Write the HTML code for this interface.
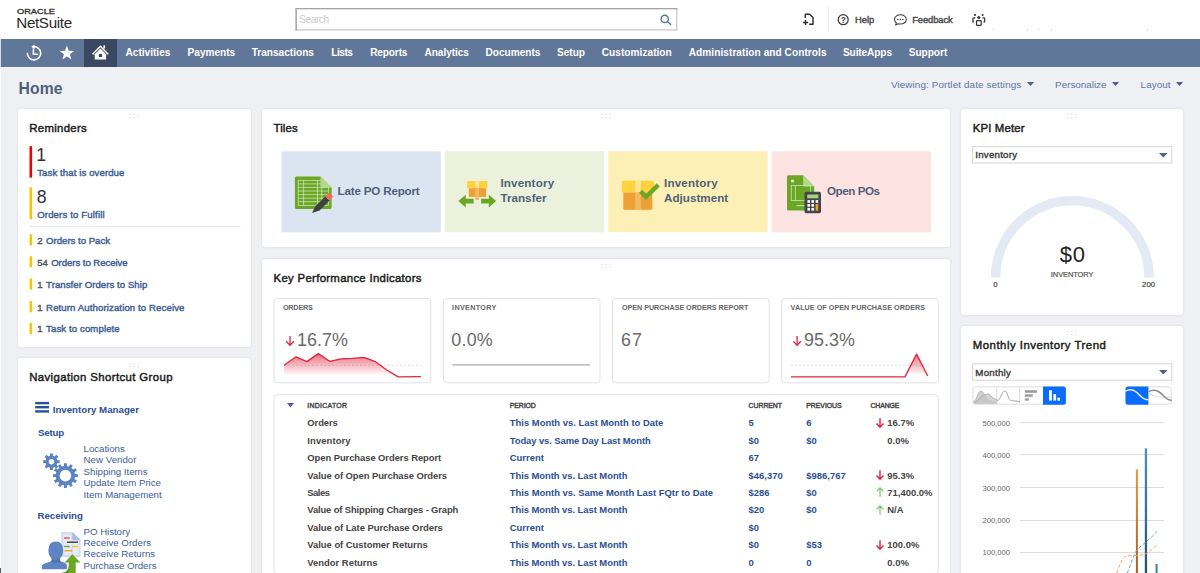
<!DOCTYPE html>
<html lang="en"><head><meta charset="utf-8"><title>Home - NetSuite</title>
<style>
html,body{margin:0;padding:0}
body{width:1200px;height:573px;overflow:hidden;position:relative;background:#eff0f4;font-family:"Liberation Sans",Arial,sans-serif;}
.t{position:absolute;white-space:pre;line-height:normal;}
.abs{position:absolute}
.card{position:absolute;background:#fff;border-radius:3px;box-shadow:0 0 2.5px rgba(50,60,80,.13)}
.grip{position:absolute;width:10px;height:5px;background-image:radial-gradient(circle,#d9dce2 0.7px,transparent 1px);background-size:3.6px 3.2px}
.kt{position:absolute;border:1px solid #e1e3e6;border-radius:4px;box-sizing:border-box;background:#fff}
.sel{position:absolute;border:1px solid #d4d6da;box-sizing:border-box;background:#fff}
.tile{position:absolute;top:151.3px;height:81px;width:159.3px}
svg{position:absolute;overflow:visible}
</style></head><body>
<div class="abs" id="hdr" style="left:0;top:0;width:1200px;height:39px;background:#fff"></div><span class="t" style="left:17.00px;top:7.00px;font-size:7.2px;color:#2e2e2e;-webkit-text-stroke:0.3px #2e2e2e;transform-origin:0 0;transform:scaleX(1.285);">ORACLE</span><span class="t" style="left:16.30px;top:14.00px;font-size:15.2px;letter-spacing:-0.352px;color:#2a2a2a;">NetSuite</span><svg style="left:0;top:0" width="700" height="39"><rect x="295.400" y="8.100" width="382" height="22.500" fill="#fff"/><rect x="295.400" y="29.200" width="382" height="1.400" fill="#cfcfcf"/><rect x="676.100" y="8.100" width="1.300" height="22.500" fill="#cdcdcd"/><rect x="295.400" y="8.100" width="382" height="1.200" fill="#9c9c9c"/><rect x="295.400" y="8.100" width="1.500" height="22.500" fill="#a4a4a4"/></svg><span class="t" style="left:299.00px;top:14.00px;font-size:10.2px;letter-spacing:-0.416px;color:#c9c9c9;">Search</span><div class="abs" style="left:828px;top:6px;width:1px;height:27px;background:#ececec"></div><span class="t" style="left:855.00px;top:14.00px;font-size:9.4px;letter-spacing:-0.027px;color:#484848;-webkit-text-stroke:0.4px #484848;">Help</span><span class="t" style="left:912.20px;top:14.00px;font-size:9.4px;letter-spacing:-0.082px;color:#484848;-webkit-text-stroke:0.4px #484848;">Feedback</span><div class="abs" style="left:993px;top:29px;width:1px;height:1px;background:#c8c8c8"></div><div class="abs" style="left:1027px;top:29px;width:1px;height:1px;background:#c8c8c8"></div><div class="abs" style="left:1038px;top:29px;width:1px;height:1px;background:#c8c8c8"></div><div class="abs" style="left:1051px;top:29px;width:1px;height:1px;background:#c8c8c8"></div><div class="abs" style="left:1147px;top:29px;width:1px;height:1px;background:#c8c8c8"></div><div class="abs" id="nav" style="left:0;top:39px;width:1200px;height:27.5px;background:#607799"></div><div class="abs" style="left:84px;top:39px;width:33px;height:27.5px;background:#3a4861"></div><span class="t" style="left:125.50px;top:47.00px;font-size:10.1px;font-weight:700;color:#fff;">Activities</span><span class="t" style="left:187.60px;top:47.00px;font-size:10.1px;font-weight:700;letter-spacing:-0.015px;color:#fff;">Payments</span><span class="t" style="left:251.70px;top:47.00px;font-size:10.1px;font-weight:700;color:#fff;">Transactions</span><span class="t" style="left:331.20px;top:47.00px;font-size:10.1px;font-weight:700;letter-spacing:-0.441px;color:#fff;">Lists</span><span class="t" style="left:370.20px;top:47.00px;font-size:10.1px;font-weight:700;letter-spacing:-0.140px;color:#fff;">Reports</span><span class="t" style="left:424.50px;top:47.00px;font-size:10.1px;font-weight:700;letter-spacing:-0.049px;color:#fff;">Analytics</span><span class="t" style="left:485.50px;top:47.00px;font-size:10.1px;font-weight:700;color:#fff;">Documents</span><span class="t" style="left:557.00px;top:47.00px;font-size:10.1px;font-weight:700;letter-spacing:-0.012px;color:#fff;">Setup</span><span class="t" style="left:601.75px;top:47.00px;font-size:10.1px;font-weight:700;letter-spacing:0.038px;color:#fff;">Customization</span><span class="t" style="left:688.75px;top:47.00px;font-size:10.1px;font-weight:700;letter-spacing:0.057px;color:#fff;">Administration and Controls</span><span class="t" style="left:843.00px;top:47.00px;font-size:10.1px;font-weight:700;letter-spacing:-0.115px;color:#fff;">SuiteApps</span><span class="t" style="left:908.70px;top:47.00px;font-size:10.1px;font-weight:700;letter-spacing:-0.015px;color:#fff;">Support</span><span class="t" style="left:18.50px;top:80.00px;font-size:15.7px;font-weight:700;letter-spacing:0.135px;color:#4d5f79;">Home</span><span class="t" style="left:890.90px;top:79.00px;font-size:9.9px;letter-spacing:0.111px;color:#5b76a6;">Viewing: Portlet date settings</span><span class="t" style="left:1055.10px;top:79.00px;font-size:9.9px;letter-spacing:-0.021px;color:#5b76a6;">Personalize</span><span class="t" style="left:1140.60px;top:79.00px;font-size:9.9px;letter-spacing:0.069px;color:#5b76a6;">Layout</span><svg style="left:1027.3px;top:82.3px" width="7.2" height="4" viewBox="0 0 7.2 4"><path d="M0 0h7.2L3.6 4z" fill="#4d6289"/></svg><svg style="left:1112.0px;top:82.3px" width="7.2" height="4" viewBox="0 0 7.2 4"><path d="M0 0h7.2L3.6 4z" fill="#4d6289"/></svg><svg style="left:1176.2px;top:82.3px" width="7.2" height="4" viewBox="0 0 7.2 4"><path d="M0 0h7.2L3.6 4z" fill="#4d6289"/></svg><div class="card" style="left:18px;top:109px;width:233px;height:238px"></div><span class="t" style="left:29.30px;top:122.00px;font-size:11.4px;letter-spacing:0.290px;color:#1c1c1c;-webkit-text-stroke:0.45px #1c1c1c;">Reminders</span><svg style="left:0;top:0" width="260" height="350"><rect x="29.500" y="146.200" width="2.600" height="31.400" fill="#f20000"/><rect x="29.500" y="187.400" width="2.600" height="31.800" fill="#fbc300"/><rect x="29" y="225.900" width="211.500" height=".9" fill="#e4e4e4"/><rect x="29.600" y="234.2" width="2.500" height="11.200" fill="#fbc300"/><rect x="29.600" y="256.2" width="2.500" height="11.200" fill="#fbc300"/><rect x="29.600" y="278.4" width="2.500" height="11.200" fill="#fbc300"/><rect x="29.600" y="301.0" width="2.500" height="11.200" fill="#fbc300"/><rect x="29.600" y="322.9" width="2.500" height="11.200" fill="#fbc300"/></svg><span class="t" style="left:36.20px;top:145.00px;font-size:17.7px;color:#333;">1</span><span class="t" style="left:37.20px;top:167.00px;font-size:9.6px;letter-spacing:0.099px;color:#3b5c94;-webkit-text-stroke:0.4px #3b5c94;">Task that is overdue</span><span class="t" style="left:36.70px;top:187.00px;font-size:17.7px;color:#333;">8</span><span class="t" style="left:37.20px;top:209.00px;font-size:9.6px;letter-spacing:0.147px;color:#3b5c94;-webkit-text-stroke:0.4px #3b5c94;">Orders to Fulfill</span><span class="t" style="left:37.20px;top:235.00px;font-size:9.6px;color:#555;-webkit-text-stroke:0.4px #555;">2</span><span class="t" style="left:46.10px;top:235.00px;font-size:9.6px;letter-spacing:-0.006px;color:#3b5c94;-webkit-text-stroke:0.4px #3b5c94;">Orders to Pack</span><span class="t" style="left:37.20px;top:257.00px;font-size:9.6px;color:#555;-webkit-text-stroke:0.4px #555;">54</span><span class="t" style="left:51.20px;top:257.00px;font-size:9.6px;letter-spacing:-0.051px;color:#3b5c94;-webkit-text-stroke:0.4px #3b5c94;">Orders to Receive</span><span class="t" style="left:37.20px;top:279.00px;font-size:9.6px;color:#555;-webkit-text-stroke:0.4px #555;">1</span><span class="t" style="left:46.10px;top:279.00px;font-size:9.6px;letter-spacing:0.060px;color:#3b5c94;-webkit-text-stroke:0.4px #3b5c94;">Transfer Orders to Ship</span><span class="t" style="left:37.20px;top:302.00px;font-size:9.6px;color:#555;-webkit-text-stroke:0.4px #555;">1</span><span class="t" style="left:46.10px;top:302.00px;font-size:9.6px;letter-spacing:0.113px;color:#3b5c94;-webkit-text-stroke:0.4px #3b5c94;">Return Authorization to Receive</span><span class="t" style="left:37.20px;top:323.00px;font-size:9.6px;color:#555;-webkit-text-stroke:0.4px #555;">1</span><span class="t" style="left:46.10px;top:323.00px;font-size:9.6px;letter-spacing:0.107px;color:#3b5c94;-webkit-text-stroke:0.4px #3b5c94;">Task to complete</span><div class="card" style="left:18px;top:358.300px;width:233px;height:230px"></div><span class="t" style="left:29.20px;top:371.00px;font-size:11.4px;letter-spacing:0.378px;color:#1c1c1c;-webkit-text-stroke:0.45px #1c1c1c;">Navigation Shortcut Group</span><svg style="left:0;top:0" width="60" height="420"><g fill="#26509a"><rect x="35.200" y="401.900" width="13.800" height="2.400"/><rect x="35.200" y="406" width="13.800" height="2.400"/><rect x="35.200" y="410.200" width="13.800" height="2.400"/></g></svg><span class="t" style="left:52.70px;top:404.00px;font-size:9.7px;font-weight:700;letter-spacing:0.010px;color:#2b4f95;">Inventory Manager</span><span class="t" style="left:38.00px;top:427.00px;font-size:9.7px;font-weight:700;letter-spacing:-0.180px;color:#2b4f95;">Setup</span><span class="t" style="left:83.60px;top:443.00px;font-size:9.7px;letter-spacing:-0.036px;color:#3c5d99;">Locations</span><span class="t" style="left:83.60px;top:454.00px;font-size:9.7px;letter-spacing:0.013px;color:#3c5d99;">New Vendor</span><span class="t" style="left:83.60px;top:466.00px;font-size:9.7px;letter-spacing:-0.015px;color:#3c5d99;">Shipping Items</span><span class="t" style="left:83.60px;top:477.00px;font-size:9.7px;letter-spacing:-0.009px;color:#3c5d99;">Update Item Price</span><span class="t" style="left:83.60px;top:489.00px;font-size:9.7px;color:#3c5d99;">Item Management</span><span class="t" style="left:37.50px;top:510.00px;font-size:9.7px;font-weight:700;letter-spacing:-0.046px;color:#2b4f95;">Receiving</span><span class="t" style="left:83.60px;top:526.00px;font-size:9.7px;letter-spacing:-0.049px;color:#3c5d99;">PO History</span><span class="t" style="left:83.60px;top:537.00px;font-size:9.7px;letter-spacing:0.007px;color:#3c5d99;">Receive Orders</span><span class="t" style="left:83.60px;top:548.00px;font-size:9.7px;color:#3c5d99;">Receive Returns</span><span class="t" style="left:83.60px;top:560.00px;font-size:9.7px;letter-spacing:-0.024px;color:#3c5d99;">Purchase Orders</span><svg style="left:0;top:0" width="260" height="573" viewBox="0 0 260 573"><path d="M52.87 467.63L52.89 469.97L50.01 469.97L50.03 467.63L48.26 466.90L46.62 468.57L44.58 466.53L46.25 464.89L45.52 463.12L43.18 463.14L43.18 460.26L45.52 460.28L46.25 458.51L44.58 456.87L46.62 454.83L48.26 456.50L50.03 455.77L50.01 453.43L52.89 453.43L52.87 455.77L54.64 456.50L56.28 454.83L58.32 456.87L56.65 458.51L57.38 460.28L59.72 460.26L59.72 463.14L57.38 463.12L56.65 464.89L58.32 466.53L56.28 468.57L54.64 466.90ZM48.75 461.70a2.70 2.70 0 1 0 5.40 0a2.70 2.70 0 1 0 -5.40 0Z" fill="#5b82c4" fill-rule="evenodd"/><path d="M66.92 485.18L66.84 488.02L63.96 488.02L63.88 485.18L61.92 484.66L60.44 487.07L57.95 485.64L59.30 483.14L57.86 481.70L55.36 483.05L53.93 480.56L56.34 479.08L55.82 477.12L52.98 477.04L52.98 474.16L55.82 474.08L56.34 472.12L53.93 470.64L55.36 468.15L57.86 469.50L59.30 468.06L57.95 465.56L60.44 464.13L61.92 466.54L63.88 466.02L63.96 463.18L66.84 463.18L66.92 466.02L68.88 466.54L70.36 464.13L72.85 465.56L71.50 468.06L72.94 469.50L75.44 468.15L76.87 470.64L74.46 472.12L74.98 474.08L77.82 474.16L77.82 477.04L74.98 477.12L74.46 479.08L76.87 480.56L75.44 483.05L72.94 481.70L71.50 483.14L72.85 485.64L70.36 487.07L68.88 484.66ZM59.60 475.60a5.80 5.80 0 1 0 11.60 0a5.80 5.80 0 1 0 -11.60 0Z" fill="#5b82c4" fill-rule="evenodd"/><path d="M61.300 532.600Q61.300 532 61.900 532H72.400L80.700 539.900V556.400Q80.700 557 80.100 557H61.900Q61.300 557 61.300 556.400Z" fill="#d3ddef"/><path d="M72.400 532L80.700 539.900H73.400Q72.400 539.900 72.400 538.900Z" fill="#a9bde0"/><rect x="63.400" y="534.600" width="8" height="20" fill="#e6ecf7"/><rect x="72.600" y="541" width="6" height="13.600" fill="#e6ecf7"/><g stroke-width="1.400" fill="none"><path d="M64.100 538H69.700" stroke="#e8463a"/><path d="M66.900 542.200H78" stroke="#3a3a3a"/><path d="M64.100 546.500H69.700" stroke="#6aa727"/><path d="M72 546.500H78" stroke="#f5c827"/><path d="M64.400 550.700H72.400" stroke="#f0a030"/></g><path d="M41.9 569.200V566.100Q41.900 564.400 44 563.800L50.500 561.500Q51.800 560.900 51.800 559.400L51.500 558.200Q48.400 555.600 48.400 550.200Q48.400 541.400 55.800 541.400Q63.200 541.400 63.200 550.200Q63.200 555.600 60.100 558.200L59.800 559.400Q59.800 560.900 61.100 561.500L64.800 562.800Q66.900 563.600 66.900 565.500V569.200Z" fill="#5f84c4"/><path d="M51.500 558.200Q55.800 561.800 60.100 558.200L59.800 559.400Q59.800 560.900 61.100 561.500Q55.800 564.800 50.500 561.500Q51.800 560.900 51.800 559.400Z" fill="#4f74b4"/><path d="M72.400 554.200L80.300 562.600H75.700V573H61.300Q68.700 572.500 68.700 566V562.600H64.600Z" fill="#6aa727"/><path d="M61.300 573Q68.700 572.500 68.700 566V573Z" fill="#578d1d"/></svg><div class="card" style="left:262px;top:109px;width:688px;height:138px"></div><span class="t" style="left:273.60px;top:122.00px;font-size:11.4px;letter-spacing:0.090px;color:#1c1c1c;-webkit-text-stroke:0.45px #1c1c1c;">Tiles</span><svg style="left:0;top:0" width="1200" height="260"><rect x="281.4" y="151.300" width="159.300" height="81" fill="#dbe5f1"/><rect x="444.8" y="151.300" width="159.300" height="81" fill="#eaf1dd"/><rect x="608.2" y="151.300" width="159.300" height="81" fill="#fdf0b6"/><rect x="771.6" y="151.300" width="159.300" height="81" fill="#fee3e3"/></svg><span class="t" style="left:337.50px;top:184.00px;font-size:11.6px;font-weight:700;letter-spacing:-0.169px;color:#4d5f79;">Late PO Report</span><span class="t" style="left:500.40px;top:176.00px;font-size:11.6px;font-weight:700;letter-spacing:0.189px;color:#4d5f79;">Inventory</span><span class="t" style="left:500.40px;top:191.00px;font-size:11.6px;font-weight:700;letter-spacing:0.062px;color:#4d5f79;">Transfer</span><span class="t" style="left:664.00px;top:176.00px;font-size:11.6px;font-weight:700;letter-spacing:0.189px;color:#4d5f79;">Inventory</span><span class="t" style="left:664.00px;top:191.00px;font-size:11.6px;font-weight:700;letter-spacing:0.048px;color:#4d5f79;">Adjustment</span><span class="t" style="left:826.90px;top:184.00px;font-size:11.6px;font-weight:700;letter-spacing:-0.423px;color:#4d5f79;">Open POs</span><svg style="left:0;top:0" width="1200" height="260" viewBox="0 0 1200 260"><path d="M296.400 176.500H320.600L331.600 187.500V207.500Q331.600 209 330.100 209H296.400Q294.900 209 294.900 207.500V178Q294.900 176.500 296.400 176.500Z" fill="#6aa727"/><path d="M320.600 176.500L331.600 187.500H321.600Q320.600 187.500 320.600 186.500Z" fill="#b5d78b"/><g stroke="#d9ecc4" stroke-width=".7" fill="none"><rect x="298.200" y="180.300" width="30.200" height="25"/><path d="M303.6 180.300V205.300"/><path d="M317.5 180.300V205.300"/><path d="M321.8 180.300V205.300"/><path d="M298.200 183.9H328.400"/><path d="M298.200 187.4H328.400"/><path d="M298.200 191.0H328.400"/><path d="M298.200 194.6H328.400"/><path d="M298.200 198.2H328.400"/><path d="M298.200 201.7H328.400"/></g><path d="M320.600 176.500L331.600 187.500H321.600Q320.600 187.500 320.600 186.500Z" fill="#b5d78b"/><path d="M312 213L315.400 206.300L325.300 196.400L329.500 200.600L319.600 210.500Z" fill="#404040"/><path d="M325.300 196.400L329.100 192.500L333.300 196.700L329.500 200.600Z" fill="#f26d5f"/><rect x="467.100" y="180.900" width="20.400" height="7.400" rx=".8" fill="#ffd33f"/><rect x="475.400" y="180.900" width="3.700" height="7.400" fill="#ffe591"/><rect x="468.800" y="188.200" width="17.300" height="8.700" fill="#eda033"/><rect x="475.400" y="188.200" width="3.700" height="11.900" rx=".5" fill="#f3ba63"/><path d="M458.400 201.100L465.700 194.800V198.700H473.600V203.500H465.700V207.400Z" fill="#6aa727"/><path d="M496.100 201.100L488.800 194.800V198.700H481.100V203.500H488.800V207.400Z" fill="#6aa727"/><path d="M623.400 180.700H652.400Q653.900 180.700 653.900 182.200V192.400H621.900V182.200Q621.900 180.700 623.400 180.700Z" fill="#ffd33f"/><path d="M623.300 192.400H652.300V208.300Q652.300 209.800 650.800 209.800H624.800Q623.300 209.800 623.300 208.300Z" fill="#eda033"/><rect x="635.200" y="180.700" width="5.600" height="11.700" fill="#ffe591"/><rect x="635.200" y="192.400" width="5.600" height="17.400" fill="#f3ba63"/><path d="M640.700 191.300L646 197L658.200 184.900" fill="none" stroke="#6aa727" stroke-width="4.300"/><path d="M788.500 175.300H803.200L814.200 186.500V209Q814.200 210.500 812.700 210.500H788.500Q787 210.500 787 209V176.800Q787 175.300 788.500 175.300Z" fill="#6aa727"/><path d="M803.200 175.300L814.200 186.500H804.200Q803.200 186.500 803.200 185.500Z" fill="#b5d78b"/><rect x="791.200" y="179.700" width="2.600" height="2.600" fill="#e8f3dc"/><g stroke="#cde4b3" stroke-width=".8" fill="none"><rect x="791.200" y="185.400" width="19.400" height="15.200"/><path d="M795.400 185.400V200.600"/><path d="M796.400 205.600H805" stroke-width="1"/></g><rect x="804.500" y="191.700" width="16.500" height="21.500" rx="1.800" fill="#454545"/><rect x="807.200" y="194.500" width="11.200" height="3.800" fill="#a9d18e"/><rect x="807.4" y="200.1" width="2.600" height="2.700" fill="#fff"/><rect x="807.4" y="204.0" width="2.600" height="2.700" fill="#fff"/><rect x="807.4" y="207.9" width="2.600" height="2.700" fill="#fff"/><rect x="811.4" y="200.1" width="2.600" height="2.700" fill="#fff"/><rect x="811.4" y="204.0" width="2.600" height="2.700" fill="#fff"/><rect x="811.4" y="207.9" width="2.600" height="2.700" fill="#fff"/><rect x="815.600" y="200.100" width="2.600" height="2.700" fill="#fff"/><rect x="815.600" y="204" width="2.600" height="6.700" fill="#f0a030"/></svg><div class="card" style="left:262px;top:259px;width:688px;height:330px"></div><span class="t" style="left:273.60px;top:272.00px;font-size:11.4px;letter-spacing:0.294px;color:#1c1c1c;-webkit-text-stroke:0.45px #1c1c1c;">Key Performance Indicators</span><svg style="left:0;top:0" width="1200" height="573"><rect x="274.1" y="298.500" width="156.700" height="84.300" rx="3.500" fill="#fff" stroke="#e0e2e5" stroke-width="1"/><rect x="443.3" y="298.500" width="156.700" height="84.300" rx="3.500" fill="#fff" stroke="#e0e2e5" stroke-width="1"/><rect x="612.5" y="298.500" width="156.700" height="84.300" rx="3.500" fill="#fff" stroke="#e0e2e5" stroke-width="1"/><rect x="781.7" y="298.500" width="156.700" height="84.300" rx="3.500" fill="#fff" stroke="#e0e2e5" stroke-width="1"/><rect x="274.100" y="394.700" width="664.200" height="178.900" rx="3.500" fill="#fff" stroke="#e0e2e5" stroke-width="1"/></svg><span class="t" style="left:282.90px;top:303.00px;font-size:7.2px;font-weight:700;letter-spacing:-0.153px;color:#666;">ORDERS</span><span class="t" style="left:452.10px;top:303.00px;font-size:7.2px;font-weight:700;letter-spacing:0.319px;color:#666;">INVENTORY</span><span class="t" style="left:622.00px;top:303.00px;font-size:7.2px;font-weight:700;letter-spacing:-0.043px;color:#666;">OPEN PURCHASE ORDERS REPORT</span><span class="t" style="left:790.60px;top:303.00px;font-size:7.2px;font-weight:700;letter-spacing:0.041px;color:#666;">VALUE OF OPEN PURCHASE ORDERS</span><span class="t" style="left:296.90px;top:330.00px;font-size:17.9px;letter-spacing:0.066px;color:#6a6a6a;">16.7%</span><span class="t" style="left:451.30px;top:330.00px;font-size:17.9px;letter-spacing:0.206px;color:#6a6a6a;">0.0%</span><span class="t" style="left:620.90px;top:330.00px;font-size:17.9px;letter-spacing:1.200px;color:#6a6a6a;">67</span><span class="t" style="left:803.90px;top:330.00px;font-size:17.9px;letter-spacing:0.066px;color:#6a6a6a;">95.3%</span><svg style="left:0;top:0" width="1200" height="400" viewBox="0 0 1200 400"><defs><linearGradient id="rg" gradientUnits="userSpaceOnUse" x1="0" y1="353" x2="0" y2="375.500"><stop offset="0" stop-color="#e0243f" stop-opacity=".68"/><stop offset="1" stop-color="#e0243f" stop-opacity="0"/></linearGradient></defs><path d="M290.0 336V345.300M286.2 341.300L290.0 345.400L293.8 341.300" fill="none" stroke="#e0243f" stroke-width="1.300"/><path d="M797.1 336V345.300M793.3 341.300L797.1 345.400L800.9 341.300" fill="none" stroke="#e0243f" stroke-width="1.300"/><path d="M284.100 365.300H421" stroke="#d4d4d4" stroke-width=".8" stroke-dasharray="2 2" fill="none"/><polygon points="284.1,365.2 296.1,356.8 306.9,361.6 318.3,353.6 329.7,361.3 341.1,358.9 352.5,358.3 363.9,357.4 375.3,361.6 386.7,370.0 398.1,376.9 420.9,376.6 420.900,377.500 284.100,377.500" fill="url(#rg)"/><polyline points="284.1,365.2 296.1,356.8 306.9,361.6 318.3,353.6 329.7,361.3 341.1,358.9 352.5,358.3 363.9,357.4 375.3,361.6 386.7,370.0 398.1,376.9 420.9,376.6" fill="none" stroke="#e0243f" stroke-width="1.300" stroke-linejoin="round"/><path d="M452.400 364.900H590.100" stroke="#ababab" stroke-width="1.400"/><path d="M790.900 365.300H929" stroke="#d4d4d4" stroke-width=".8" stroke-dasharray="2 2" fill="none"/><polygon points="904.900,377.500 916.600,354.100 927.700,377.500" fill="url(#rg)"/><polyline points="790.9,376.9 904.9,376.9 916.6,354.1 927.7,376.0" fill="none" stroke="#e0243f" stroke-width="1.300" stroke-linejoin="round"/></svg><svg style="left:287.3px;top:402.6px" width="7" height="4.4" viewBox="0 0 7 4.4"><path d="M0 0h7L3.5 4.4z" fill="#47639a"/></svg><span class="t" style="left:307.30px;top:402.00px;font-size:6.9px;letter-spacing:0.292px;color:#444;-webkit-text-stroke:0.4px #444;">INDICATOR</span><span class="t" style="left:509.75px;top:402.00px;font-size:6.9px;letter-spacing:-0.084px;color:#444;-webkit-text-stroke:0.4px #444;">PERIOD</span><span class="t" style="left:748.60px;top:402.00px;font-size:6.9px;letter-spacing:-0.048px;color:#444;-webkit-text-stroke:0.4px #444;">CURRENT</span><span class="t" style="left:806.30px;top:402.00px;font-size:6.9px;letter-spacing:-0.046px;color:#444;-webkit-text-stroke:0.4px #444;">PREVIOUS</span><span class="t" style="left:870.50px;top:402.00px;font-size:6.9px;letter-spacing:-0.137px;color:#444;-webkit-text-stroke:0.4px #444;">CHANGE</span><span class="t" style="left:307.30px;top:417.00px;font-size:9.45px;font-weight:700;letter-spacing:-0.091px;color:#444;">Orders</span><span class="t" style="left:509.75px;top:417.00px;font-size:9.45px;font-weight:700;color:#2b4f95;">This Month vs. Last Month to Date</span><span class="t" style="left:748.60px;top:417.00px;font-size:9.45px;font-weight:700;color:#2b4f95;">5</span><span class="t" style="left:806.30px;top:417.00px;font-size:9.45px;font-weight:700;color:#2b4f95;">6</span><span class="t" style="left:887.30px;top:417.00px;font-size:9.45px;font-weight:700;color:#444;">16.7%</span><svg style="left:876.2px;top:417.8px" width="8" height="10" viewBox="0 0 8 10"><path d="M4 0.300V9M0.500 5.600L4 9.200L7.500 5.600" fill="none" stroke="#e0243f" stroke-width="1.450"/></svg><span class="t" style="left:307.30px;top:435.00px;font-size:9.45px;font-weight:700;letter-spacing:0.102px;color:#444;">Inventory</span><span class="t" style="left:509.75px;top:435.00px;font-size:9.45px;font-weight:700;letter-spacing:-0.090px;color:#2b4f95;">Today vs. Same Day Last Month</span><span class="t" style="left:748.60px;top:435.00px;font-size:9.45px;font-weight:700;color:#2b4f95;">$0</span><span class="t" style="left:806.30px;top:435.00px;font-size:9.45px;font-weight:700;color:#2b4f95;">$0</span><span class="t" style="left:887.30px;top:435.00px;font-size:9.45px;font-weight:700;color:#444;">0.0%</span><span class="t" style="left:307.30px;top:452.00px;font-size:9.45px;font-weight:700;letter-spacing:-0.075px;color:#444;">Open Purchase Orders Report</span><span class="t" style="left:509.75px;top:452.00px;font-size:9.45px;font-weight:700;color:#2b4f95;">Current</span><span class="t" style="left:748.60px;top:452.00px;font-size:9.45px;font-weight:700;color:#2b4f95;">67</span><span class="t" style="left:307.30px;top:470.00px;font-size:9.45px;font-weight:700;letter-spacing:-0.065px;color:#444;">Value of Open Purchase Orders</span><span class="t" style="left:509.75px;top:470.00px;font-size:9.45px;font-weight:700;letter-spacing:-0.055px;color:#2b4f95;">This Month vs. Last Month</span><span class="t" style="left:748.60px;top:470.00px;font-size:9.45px;font-weight:700;color:#2b4f95;">$46,370</span><span class="t" style="left:806.30px;top:470.00px;font-size:9.45px;font-weight:700;color:#2b4f95;">$986,767</span><span class="t" style="left:887.30px;top:470.00px;font-size:9.45px;font-weight:700;color:#444;">95.3%</span><svg style="left:876.2px;top:470.0px" width="8" height="10" viewBox="0 0 8 10"><path d="M4 0.300V9M0.500 5.600L4 9.200L7.500 5.600" fill="none" stroke="#e0243f" stroke-width="1.450"/></svg><span class="t" style="left:307.30px;top:487.00px;font-size:9.45px;font-weight:700;letter-spacing:-0.518px;color:#444;">Sales</span><span class="t" style="left:509.75px;top:487.00px;font-size:9.45px;font-weight:700;letter-spacing:-0.016px;color:#2b4f95;">This Month vs. Same Month Last FQtr to Date</span><span class="t" style="left:748.60px;top:487.00px;font-size:9.45px;font-weight:700;color:#2b4f95;">$286</span><span class="t" style="left:806.30px;top:487.00px;font-size:9.45px;font-weight:700;color:#2b4f95;">$0</span><span class="t" style="left:887.30px;top:487.00px;font-size:9.45px;font-weight:700;color:#444;">71,400.0%</span><svg style="left:876.2px;top:487.4px" width="8" height="10" viewBox="0 0 8 10"><path d="M4 9.700V1M0.600 4.300L4 0.800L7.400 4.300" fill="none" stroke="#6dcb5e" stroke-width="1.150"/></svg><span class="t" style="left:307.30px;top:504.00px;font-size:9.45px;font-weight:700;letter-spacing:-0.148px;color:#444;">Value of Shipping Charges - Graph</span><span class="t" style="left:509.75px;top:504.00px;font-size:9.45px;font-weight:700;letter-spacing:-0.055px;color:#2b4f95;">This Month vs. Last Month</span><span class="t" style="left:748.60px;top:504.00px;font-size:9.45px;font-weight:700;color:#2b4f95;">$20</span><span class="t" style="left:806.30px;top:504.00px;font-size:9.45px;font-weight:700;color:#2b4f95;">$0</span><span class="t" style="left:887.30px;top:504.00px;font-size:9.45px;font-weight:700;color:#444;">N/A</span><svg style="left:876.2px;top:504.8px" width="8" height="10" viewBox="0 0 8 10"><path d="M4 9.700V1M0.600 4.300L4 0.800L7.400 4.300" fill="none" stroke="#6dcb5e" stroke-width="1.150"/></svg><span class="t" style="left:307.30px;top:522.00px;font-size:9.45px;font-weight:700;letter-spacing:-0.050px;color:#444;">Value of Late Purchase Orders</span><span class="t" style="left:509.75px;top:522.00px;font-size:9.45px;font-weight:700;color:#2b4f95;">Current</span><span class="t" style="left:748.60px;top:522.00px;font-size:9.45px;font-weight:700;color:#2b4f95;">$0</span><span class="t" style="left:307.30px;top:539.00px;font-size:9.45px;font-weight:700;letter-spacing:-0.031px;color:#444;">Value of Customer Returns</span><span class="t" style="left:509.75px;top:539.00px;font-size:9.45px;font-weight:700;letter-spacing:-0.055px;color:#2b4f95;">This Month vs. Last Month</span><span class="t" style="left:748.60px;top:539.00px;font-size:9.45px;font-weight:700;color:#2b4f95;">$0</span><span class="t" style="left:806.30px;top:539.00px;font-size:9.45px;font-weight:700;color:#2b4f95;">$53</span><span class="t" style="left:887.30px;top:539.00px;font-size:9.45px;font-weight:700;color:#444;">100.0%</span><svg style="left:876.2px;top:539.6px" width="8" height="10" viewBox="0 0 8 10"><path d="M4 0.300V9M0.500 5.600L4 9.200L7.500 5.600" fill="none" stroke="#e0243f" stroke-width="1.450"/></svg><span class="t" style="left:307.30px;top:557.00px;font-size:9.45px;font-weight:700;letter-spacing:-0.006px;color:#444;">Vendor Returns</span><span class="t" style="left:509.75px;top:557.00px;font-size:9.45px;font-weight:700;letter-spacing:-0.055px;color:#2b4f95;">This Month vs. Last Month</span><span class="t" style="left:748.60px;top:557.00px;font-size:9.45px;font-weight:700;color:#2b4f95;">0</span><span class="t" style="left:806.30px;top:557.00px;font-size:9.45px;font-weight:700;color:#2b4f95;">0</span><span class="t" style="left:887.30px;top:557.00px;font-size:9.45px;font-weight:700;color:#444;">0.0%</span><div class="card" style="left:961px;top:109px;width:222.2px;height:206px"></div><span class="t" style="left:972.80px;top:122.00px;font-size:11.4px;letter-spacing:0.132px;color:#1c1c1c;-webkit-text-stroke:0.45px #1c1c1c;">KPI Meter</span><svg style="left:0;top:0" width="1200" height="400"><rect x="972.700" y="146.600" width="199.100" height="16.400" fill="#fff" stroke="#d3d5d9" stroke-width="1"/></svg><span class="t" style="left:975.30px;top:149.00px;font-size:9.7px;letter-spacing:0.230px;color:#3c3c3c;-webkit-text-stroke:0.4px #3c3c3c;">Inventory</span><svg style="left:1159.4px;top:152.8px" width="8.6" height="4.5" viewBox="0 0 8.6 4.5"><path d="M0 0h8.6L4.3 4.5z" fill="#4d6289"/></svg><svg style="left:0;top:0" width="1200" height="573"><path d="M995.55 277.6A76.75 76.75 0 0 1 1149.05 277.6" fill="none" stroke="#e4eaf3" stroke-width="9.5"/></svg><span class="t" style="left:1059.70px;top:242.00px;font-size:22px;letter-spacing:0.716px;color:#222;">$0</span><span class="t" style="left:1050.85px;top:270.00px;font-size:7.5px;letter-spacing:-0.098px;color:#555;-webkit-text-stroke:0.2px #555;">INVENTORY</span><span class="t" style="left:993.30px;top:280.00px;font-size:7.7px;color:#444;-webkit-text-stroke:0.2px #444;">0</span><span class="t" style="left:1142.10px;top:280.00px;font-size:7.7px;letter-spacing:0.036px;color:#444;-webkit-text-stroke:0.2px #444;">200</span><div class="card" style="left:961px;top:326.3px;width:222.2px;height:260px"></div><span class="t" style="left:972.80px;top:339.00px;font-size:11.4px;letter-spacing:0.491px;color:#1c1c1c;-webkit-text-stroke:0.45px #1c1c1c;">Monthly Inventory Trend</span><svg style="left:0;top:0" width="1200" height="400"><rect x="972.700" y="363.800" width="199.100" height="16.400" fill="#fff" stroke="#d3d5d9" stroke-width="1"/></svg><span class="t" style="left:975.30px;top:367.00px;font-size:9.7px;letter-spacing:0.280px;color:#3c3c3c;-webkit-text-stroke:0.4px #3c3c3c;">Monthly</span><svg style="left:1159.4px;top:369.9px" width="8.6" height="4.5" viewBox="0 0 8.6 4.5"><path d="M0 0h8.6L4.3 4.5z" fill="#4d6289"/></svg><svg style="left:0;top:0" width="1200" height="420" viewBox="0 0 1200 420"><rect x="973" y="386.900" width="92.400" height="17.300" rx="2.500" fill="#fff" stroke="#dcdcdc" stroke-width="1"/><path d="M1043 386.400H1063.400Q1065.900 386.400 1065.900 388.900V402.200Q1065.900 404.700 1063.400 404.700H1043Z" fill="#0a6cff"/><rect x="1126" y="386.900" width="45.200" height="17.300" rx="2.500" fill="#fff" stroke="#dcdcdc" stroke-width="1"/><path d="M1148.400 386.400H1128Q1125.500 386.400 1125.500 388.900V402.200Q1125.500 404.700 1128 404.700H1148.400Z" fill="#0a6cff"/><path d="M996.800 387V404M1019.700 387V404" stroke="#dcdcdc" stroke-width="1"/><clipPath id="c1"><rect x="973.300" y="387.200" width="23.500" height="16.500" rx="2"/></clipPath><g clip-path="url(#c1)"><path d="M973 402C977 401 977.500 391.100 981 391.100S985 400 990 401S994 403 997 403.500V404.700H973Z" fill="#cfcfcf" stroke="#b3b3b3" stroke-width=".8"/><path d="M973 403C978 402 982 394.100 987.500 394.100C991 394.100 991 398.500 997 399.500V404.700H973Z" fill="#c4c4c4" fill-opacity=".75" stroke="#ababab" stroke-width=".8"/></g><path d="M996.800 400.800C1001 400.500 1001.500 391.100 1004.800 391.100S1007.500 399 1010.500 400.200S1016 400.600 1019.700 401.700" fill="none" stroke="#a8a8a8" stroke-width="1"/><g fill="#9c9c9c"><rect x="1024.800" y="390.200" width="12.100" height="2.600"/><rect x="1024.800" y="394.300" width="8" height="2.500"/><rect x="1024.800" y="398.300" width="4.100" height="2.400"/></g><g fill="#fff"><rect x="1049" y="390.200" width="2.900" height="10.400"/><rect x="1053.400" y="394.100" width="2.700" height="6.500"/><rect x="1057.400" y="397.600" width="2.600" height="3"/></g><path d="M1125.400 391.200C1128 389.600 1131.500 389.200 1134.500 390.800C1140 393.600 1141 399.900 1148.400 399.800" fill="none" stroke="#fff" stroke-opacity=".9" stroke-width="1.500"/><path d="M1148.800 392.800C1153 397 1162 397.600 1171.600 396.800" fill="none" stroke="#dedede" stroke-width="1"/><path d="M1148.800 391.700C1151.500 390.100 1155 389.900 1158 391.300C1164 394.200 1164.500 400.300 1171.700 400.300" fill="none" stroke="#8c8c8c" stroke-width="1.500"/></svg><div class="abs" style="left:1020px;top:421.6px;width:144.4px;height:1px;background:#dedede"></div><span class="t" style="left:982.40px;top:419.00px;font-size:7.7px;letter-spacing:-0.033px;color:#666;">500,000</span><div class="abs" style="left:1020px;top:454.2px;width:144.4px;height:1px;background:#dedede"></div><span class="t" style="left:982.40px;top:451.00px;font-size:7.7px;letter-spacing:-0.033px;color:#666;">400,000</span><div class="abs" style="left:1020px;top:486.8px;width:144.4px;height:1px;background:#dedede"></div><span class="t" style="left:982.40px;top:484.00px;font-size:7.7px;letter-spacing:-0.033px;color:#666;">300,000</span><div class="abs" style="left:1020px;top:519.5px;width:144.4px;height:1px;background:#dedede"></div><span class="t" style="left:982.40px;top:516.00px;font-size:7.7px;letter-spacing:-0.033px;color:#666;">200,000</span><div class="abs" style="left:1020px;top:552.1px;width:144.4px;height:1px;background:#dedede"></div><span class="t" style="left:982.40px;top:548.00px;font-size:7.7px;letter-spacing:-0.033px;color:#666;">100,000</span><svg style="left:0;top:0" width="1200" height="573" viewBox="0 0 1200 573"><defs><linearGradient id="og" x1="0" y1="0" x2="0" y2="1"><stop offset="0" stop-color="#f0933a"/><stop offset="1" stop-color="#a85f1f"/></linearGradient><linearGradient id="bg" x1="0" y1="0" x2="0" y2="1"><stop offset="0" stop-color="#4f8fc0"/><stop offset="1" stop-color="#27506f"/></linearGradient></defs><rect x="1135.900" y="469.500" width="2" height="104" fill="url(#og)"/><rect x="1144.800" y="448.300" width="2.300" height="125" fill="url(#bg)"/><rect x="1155.600" y="564" width="2" height="10" fill="#3f7cab"/><path d="M1127.200 573C1131 565 1133 556 1136.300 551S1150 540 1156.800 531.400" fill="none" stroke="#6aa3d5" stroke-width="1" stroke-dasharray="3.500 2"/><path d="M1116.600 573C1120 565 1122 556.500 1127 556S1140 556 1145.300 554S1153 547 1158 545.600" fill="none" stroke="#f2a660" stroke-width="1" stroke-dasharray="3.500 2"/></svg><svg style="left:0;top:0" width="1200" height="70" viewBox="0 0 1200 70"><g fill="none" stroke="#5572a0" stroke-width="1.4" stroke-linecap="round"><circle cx="664.7" cy="18.9" r="3.6"/><path d="M667.4 21.6L670.6 24.6"/></g><g fill="none" stroke="#2b2b2b" stroke-width="1.4" stroke-linejoin="round"><path d="M805.3 17.9V14.3H809.5L813 17.6V24.2H809.2"/><path d="M805.5 19.9V25M802.9 22.45H808.1" stroke-width="1.4"/></g><circle cx="843.2" cy="19.7" r="5" fill="none" stroke="#3a3a3a" stroke-width="1.25"/><text x="843.2" y="22.6" text-anchor="middle" font-family="Liberation Sans, Arial, sans-serif" font-weight="700" font-size="8.2" fill="#3a3a3a">?</text><path d="M900.4 14.7c3.3 0 5.9 2.1 5.9 4.7s-2.6 4.7-5.9 4.7c-.8 0-1.5-.1-2.2-.3l-2.6 1.3.8-2.2c-1.2-.9-1.9-2.1-1.900-3.500 0-2.600 2.600-4.700 5.900-4.700z" fill="none" stroke="#3a3a3a" stroke-width="1.05" stroke-linejoin="round"/><g fill="#3a3a3a"><circle cx="897.9" cy="19.5" r=".75"/><circle cx="900.4" cy="19.5" r=".75"/><circle cx="902.9" cy="19.5" r=".75"/></g><g fill="#333"><circle cx="978.75" cy="17.5" r="1.5"/><circle cx="975" cy="15" r="1.05"/><circle cx="982.6" cy="15" r="1.05"/></g><g fill="none" stroke="#333" stroke-width="1.2" stroke-linejoin="round"><rect x="976.5" y="20.6" width="4.700" height="4.700" rx=".5"/><path d="M975.3 17.900H973.600Q972.900 17.900 972.900 18.700V21.800H974.200M982.300 17.900H984Q984.700 17.900 984.700 18.700V21.800H983.400"/></g><g fill="none" stroke="#fff" stroke-width="1.6" stroke-linecap="round" stroke-linejoin="round"><path d="M27.400 53.500A6.650 6.650 0 1 0 33.2 46.650"/><path d="M33.4 49V54.200H37.400"/></g><path d="M31.3 46.700L34.500 44.500V48.900z" fill="#fff"/><polygon points="66.90,45.60 68.75,50.75 74.22,50.92 69.90,54.27 71.43,59.53 66.90,56.45 62.37,59.53 63.90,54.27 59.58,50.92 65.05,50.75" fill="#fff"/><g><path d="M92.600 54.200L100.400 46.300L108.200 54.200" fill="none" stroke="#fff" stroke-width="1.500" stroke-linejoin="miter"/><path d="M94.700 54.300L100.400 48.600L106.100 54.300V59.400H94.700z" fill="#fff"/><rect x="98.800" y="54" width="3.300" height="3" fill="#3a4861"/><rect x="103.400" y="45.300" width="1.700" height="3.200" fill="#fff"/></g></svg><svg style="left:0;top:0" width="1200" height="573"><g fill="#e2e3e8"><circle cx="130.0" cy="114.6" r=".800"/><circle cx="130.0" cy="117.8" r=".800"/><circle cx="134.2" cy="114.6" r=".800"/><circle cx="134.2" cy="117.8" r=".800"/><circle cx="138.3" cy="114.6" r=".800"/><circle cx="138.3" cy="117.8" r=".800"/><circle cx="601.9" cy="114.3" r=".800"/><circle cx="601.9" cy="117.5" r=".800"/><circle cx="606.0" cy="114.3" r=".800"/><circle cx="606.0" cy="117.5" r=".800"/><circle cx="610.2" cy="114.3" r=".800"/><circle cx="610.2" cy="117.5" r=".800"/><circle cx="601.9" cy="264.3" r=".800"/><circle cx="601.9" cy="267.5" r=".800"/><circle cx="606.0" cy="264.3" r=".800"/><circle cx="606.0" cy="267.5" r=".800"/><circle cx="610.2" cy="264.3" r=".800"/><circle cx="610.2" cy="267.5" r=".800"/><circle cx="1067.4" cy="114.3" r=".800"/><circle cx="1067.4" cy="117.5" r=".800"/><circle cx="1071.6" cy="114.3" r=".800"/><circle cx="1071.6" cy="117.5" r=".800"/><circle cx="1075.7" cy="114.3" r=".800"/><circle cx="1075.7" cy="117.5" r=".800"/><circle cx="1067.4" cy="331.5" r=".800"/><circle cx="1067.4" cy="334.7" r=".800"/><circle cx="1071.6" cy="331.5" r=".800"/><circle cx="1071.6" cy="334.7" r=".800"/><circle cx="1075.7" cy="331.5" r=".800"/><circle cx="1075.7" cy="334.7" r=".800"/><circle cx="130.0" cy="363.7" r=".800"/><circle cx="130.0" cy="366.9" r=".800"/><circle cx="134.2" cy="363.7" r=".800"/><circle cx="134.2" cy="366.9" r=".800"/><circle cx="138.3" cy="363.7" r=".800"/><circle cx="138.3" cy="366.9" r=".800"/></g></svg><div class="abs" style="left:0;top:39px;width:1px;height:534px;background:rgba(255,255,255,.75)"></div><div class="abs" style="left:0;top:567.5px;width:1.2px;height:6px;background:#5a5a5a"></div></body></html>
